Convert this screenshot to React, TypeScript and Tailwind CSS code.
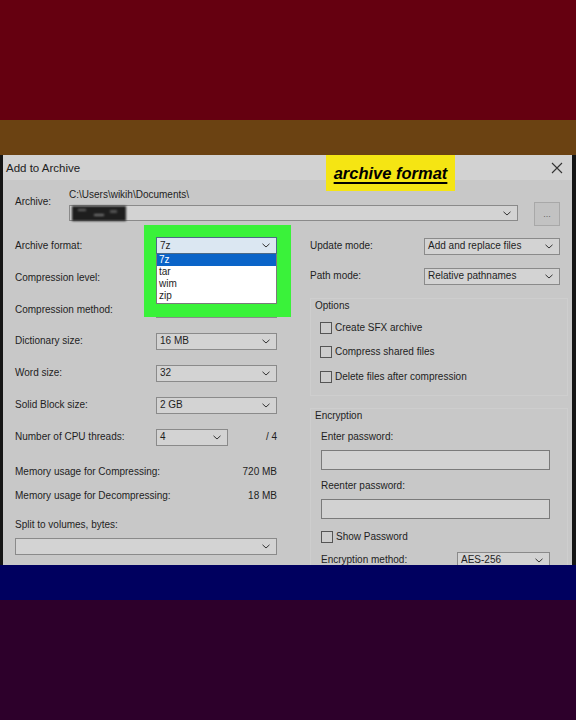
import React from "react";

const Chev = () => (
  <svg width="8" height="5" viewBox="0 0 8 5" className="shrink-0">
    <polyline points="0.5,0.8 4,4 7.5,0.8" fill="none" stroke="#333" strokeWidth="1" />
  </svg>
);

function Sel({ text, className }: { text: string; className: string }) {
  return (
    <div className={`flex items-center justify-between border border-[#8a8a8a] bg-[#d3d3d3] pl-[3px] pr-[6px] text-[10px] leading-[12px] text-[#1e1e1e] ${className}`}>
      <span>{text}</span>
      <Chev />
    </div>
  );
}

function Row({ label, h, children }: { label: string; h: string; children?: React.ReactNode }) {
  return (
    <div className={`flex items-center ${h}`}>
      <div className="w-[141px] text-[10px] leading-[12px]">{label}</div>
      {children}
    </div>
  );
}

function Check({ label, h }: { label: string; h: string }) {
  return (
    <div className={`flex items-center gap-[3px] ${h}`}>
      <div className="h-[12px] w-[12px] border border-[#555] bg-[#cdcdcd]" />
      <span className="text-[10px] leading-[12px]">{label}</span>
    </div>
  );
}

export default function App() {
  return (
    <div className="flex h-[720px] w-[576px] flex-col overflow-hidden font-['Liberation_Sans',Arial,sans-serif] text-[#1e1e1e]">
      <div className="h-[120px] bg-[#650010]" />
      <div className="h-[35px] bg-[#6b4212]" />
      <div className="relative h-[410px] overflow-hidden border-l-[3px] border-r-[4px] border-[#151515] bg-[#c8c8c8]">
        {/* title bar */}
        <div className="flex h-[25px] items-center justify-between bg-[#d2d2d2] pl-[3px] pr-[9px]">
          <span className="text-[11.5px] leading-[14px] text-[#222]">Add to Archive</span>
          <svg width="12" height="12" viewBox="0 0 12 12">
            <path d="M1 1 L11 11 M11 1 L1 11" stroke="#333" strokeWidth="1.1" />
          </svg>
        </div>

        {/* archive row */}
        <div className="flex h-[50px] pl-[12px]">
          <div className="w-[54px] pt-[16px] text-[10px] leading-[12px]">Archive:</div>
          <div className="flex flex-col pt-[9px]">
            <div className="h-[16px] text-[10px] leading-[12px]">C:\Users\wikih\Documents\</div>
            <div className="flex items-start gap-[16px]">
              <div className="relative flex h-[16px] w-[449px] items-center justify-end border border-[#8a8a8a] bg-[#d3d3d3] pr-[6px]">
                <div className="absolute left-[2px] top-[0px] h-[15px] w-[54px] bg-[#1e1e1e] blur-[1px]" />
                <div className="absolute left-[8px] top-[3px] h-[2px] w-[8px] bg-[#666] blur-[1px]" />
                <div className="absolute left-[24px] top-[8px] h-[2px] w-[10px] bg-[#777] blur-[1px]" />
                <div className="absolute left-[40px] top-[4px] h-[3px] w-[7px] bg-[#555] blur-[1px]" />
                <Chev />
              </div>
              <div className="-mt-[3px] flex h-[24px] w-[26px] items-center justify-center border border-[#a8a8a8] bg-[#c2c2c2] text-[9px] leading-[10px] text-[#666]">
                ...
              </div>
            </div>
          </div>
        </div>

        {/* two columns */}
        <div className="flex">
          {/* left column */}
          <div className="flex w-[274px] flex-col pl-[12px]">
            <Row label="Archive format:" h="h-[32px]">
              <div className="h-[17px] w-[121px]" />
            </Row>
            <Row label="Compression level:" h="h-[32px]">
              <Sel text="" className="h-[17px] w-[121px]" />
            </Row>
            <Row label="Compression method:" h="h-[31px]">
              <Sel text="" className="h-[17px] w-[121px]" />
            </Row>
            <Row label="Dictionary size:" h="h-[32px]">
              <Sel text="16 MB" className="h-[17px] w-[121px]" />
            </Row>
            <Row label="Word size:" h="h-[32px]">
              <Sel text="32" className="h-[17px] w-[121px]" />
            </Row>
            <Row label="Solid Block size:" h="h-[32px]">
              <Sel text="2 GB" className="h-[17px] w-[121px]" />
            </Row>
            <Row label="Number of CPU threads:" h="h-[32px]">
              <Sel text="4" className="h-[17px] w-[72px]" />
              <div className="flex-1 text-right text-[10px] leading-[12px]">/ 4</div>
            </Row>
            <div className="mt-[7px] flex h-[24px] items-center justify-between text-[10px] leading-[12px]">
              <span>Memory usage for Compressing:</span>
              <span>720 MB</span>
            </div>
            <div className="flex h-[24px] items-center justify-between text-[10px] leading-[12px]">
              <span>Memory usage for Decompressing:</span>
              <span>18 MB</span>
            </div>
            <div className="mt-[9px] flex h-[16px] items-center text-[10px] leading-[12px]">Split to volumes, bytes:</div>
            <Sel text="" className="mt-[5px] h-[17px] w-[262px]" />
          </div>

          {/* right column */}
          <div className="ml-[33px] flex w-[258px] flex-col">
            <div className="flex h-[32px] items-center">
              <div className="w-[114px] text-[10px] leading-[12px]">Update mode:</div>
              <Sel text="Add and replace files" className="h-[17px] w-[136px] bg-[#c3c3c3]" />
            </div>
            <div className="flex h-[28px] items-center">
              <div className="w-[114px] text-[10px] leading-[12px]">Path mode:</div>
              <Sel text="Relative pathnames" className="h-[17px] w-[136px] bg-[#c3c3c3]" />
            </div>
            <div className="mt-[8px] flex flex-col border border-[#cecece] pb-[6px] pl-[4px]">
              <div className="h-[14px] text-[10px] leading-[14px]">Options</div>
              <div className="mt-[3px] flex flex-col pl-[5px]">
                <Check label="Create SFX archive" h="h-[24px]" />
                <Check label="Compress shared files" h="h-[24px]" />
                <Check label="Delete files after compression" h="h-[25px]" />
              </div>
            </div>
            <div className="mt-[12px] flex flex-col border border-[#cecece] pb-[10px] pl-[4px]">
              <div className="h-[14px] text-[10px] leading-[14px]">Encryption</div>
              <div className="flex flex-col pl-[6px]">
                <div className="mt-[7px] h-[14px] text-[10px] leading-[14px]">Enter password:</div>
                <div className="mt-[6px] h-[20px] w-[229px] border border-[#7a7a7a] bg-[#d2d2d2]" />
                <div className="mt-[9px] h-[14px] text-[10px] leading-[14px]">Reenter password:</div>
                <div className="mt-[6px] h-[20px] w-[229px] border border-[#7a7a7a] bg-[#d2d2d2]" />
                <Check label="Show Password" h="mt-[10px] h-[16px]" />
                <div className="mt-[7px] flex h-[16px] items-center">
                  <div className="w-[136px] text-[10px] leading-[12px]">Encryption method:</div>
                  <Sel text="AES-256" className="h-[17px] w-[93px] bg-[#c3c3c3]" />
                </div>
              </div>
            </div>
          </div>
        </div>

        {/* green highlight with open combo */}
        <div className="absolute left-[141px] top-[70px] h-[92px] w-[147px] bg-[#3af23a]">
          <div className="ml-[12px] mt-[12px] flex w-[121px] flex-col">
            <div className="flex h-[17px] items-center justify-between border border-[#4d6a86] bg-[#dbe7f2] pl-[3px] pr-[6px] text-[10px] leading-[12px]">
              <span>7z</span>
              <Chev />
            </div>
            <div className="flex flex-col border border-t-0 border-[#7a7a7a] bg-white pb-[1px] text-[10px] leading-[12px]">
              <div className="h-[12px] bg-[#0a64c8] pl-[2px] text-white">7z</div>
              <div className="h-[12px] pl-[2px]">tar</div>
              <div className="h-[12px] pl-[2px]">wim</div>
              <div className="h-[12px] pl-[2px]">zip</div>
            </div>
          </div>
        </div>

        {/* yellow label */}
        <div className="absolute left-[323px] top-0 flex h-[36px] w-[129px] items-center justify-center bg-[#f5e513]">
          <span className="text-[16.5px] font-bold italic leading-[20px] text-black underline decoration-2 underline-offset-[3px]">
            archive format
          </span>
        </div>
      </div>
      <div className="h-[35px] bg-[#00005f]" />
      <div className="flex-1 bg-[#2d002b]" />
    </div>
  );
}
